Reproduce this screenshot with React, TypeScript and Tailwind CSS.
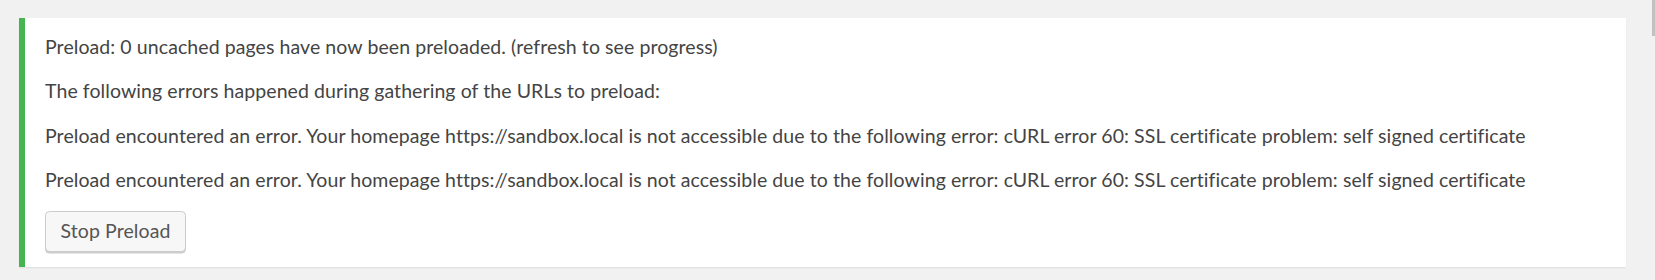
const ERROR_LINE =
  "Preload encountered an error. Your homepage https://sandbox.local is not accessible due to the following error: cURL error 60: SSL certificate problem: self signed certificate";

export default function App() {
  return (
    <div className="relative h-[280px] w-full overflow-hidden bg-[#f1f1f1] pl-[19px] pr-[29px] pt-[18px] font-['Lato','Open_Sans',sans-serif] text-[19.5px] leading-[1.5] tracking-[0.08px] text-[#444]">
      {/* notice panel */}
      <div className="border-l-[6px] border-[#46b450] bg-white py-[1.5px] pl-[20px] pr-[18px] shadow-[0_1.5px_1.5px_rgba(0,0,0,0.06)]">
        <p className="my-[9.25px] py-[3px]">
          Preload: 0 uncached pages have now been preloaded. (refresh to see progress)
        </p>
        <p className="my-[9.25px] py-[3px]">
          The following errors happened during gathering of the URLs to preload:
        </p>
        <p className="my-[9.25px] py-[3px]">{ERROR_LINE}</p>
        <p className="my-[9.25px] py-[3px]">{ERROR_LINE}</p>
        <div className="my-[9.25px] pb-[4.5px] pt-[4px]">
          <button className="block h-[41px] w-[141px] rounded-[4.5px] border-[1.5px] border-[#ccc] bg-[#f7f7f7] text-[19.5px] leading-[38px] text-[#555] shadow-[0_1.5px_0_#ccc]">
            Stop Preload
          </button>
        </div>
      </div>

      {/* scrollbar thumb */}
      <div className="absolute right-0 top-0 h-[36px] w-[3px] bg-[#c1c1c1]" />
    </div>
  );
}
